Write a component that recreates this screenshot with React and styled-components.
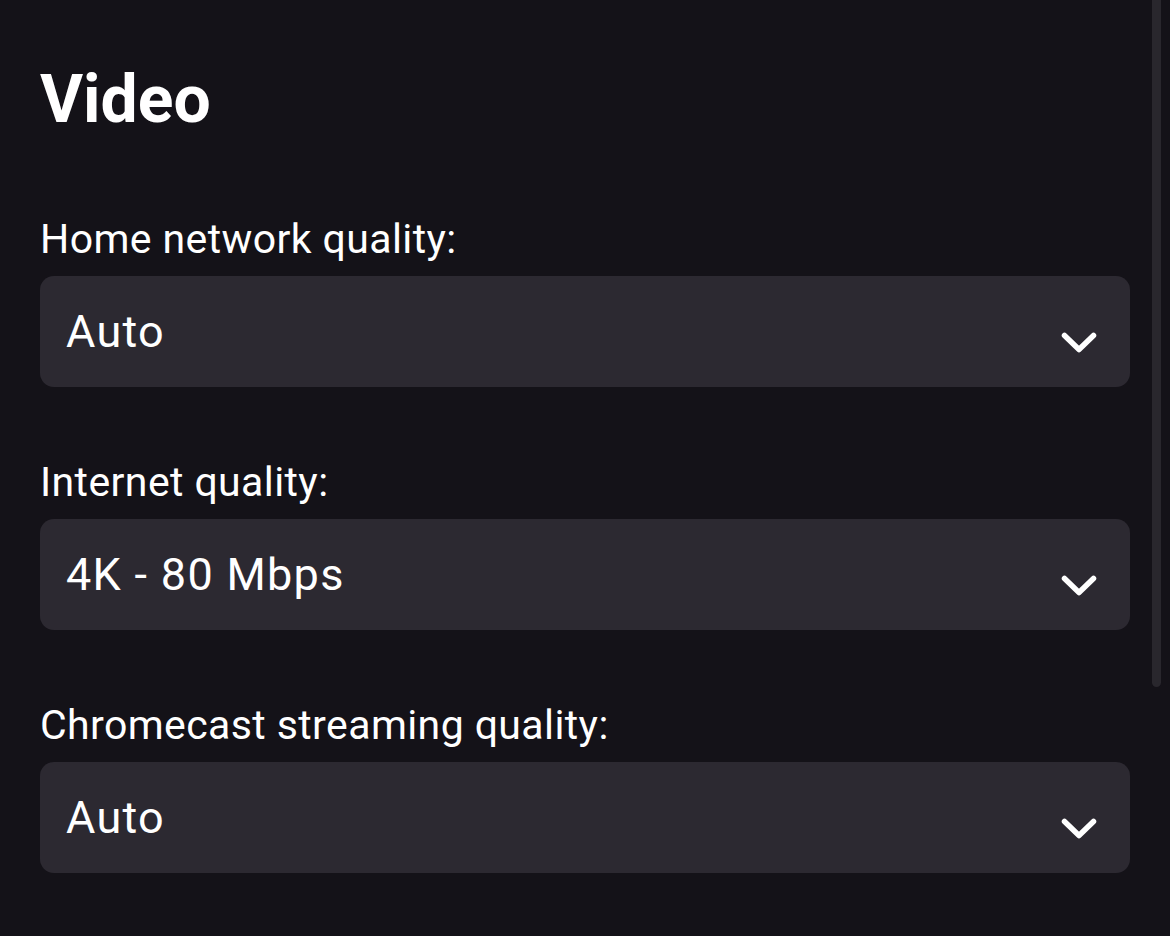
import styled, { createGlobalStyle } from "styled-components";

const GlobalStyle = createGlobalStyle`
  html, body {
    margin: 0;
    background: #141218;
  }
  body {
    font-family: Roboto, "Noto Sans", "Liberation Sans", sans-serif;
    color: #ffffff;
    overflow: hidden;
  }
`;

const fields = [
  { label: "Home network quality:", value: "Auto" },
  { label: "Internet quality:", value: "4K - 80 Mbps" },
  { label: "Chromecast streaming quality:", value: "Auto" },
];

const Chevron = () => (
  <ChevronIcon width="36" height="22" viewBox="0 0 36 22" aria-hidden="true">
    <polyline
      points="3.5,3.5 18,17.5 32.5,3.5"
      fill="none"
      stroke="#ffffff"
      strokeWidth="5.5"
      strokeLinecap="round"
      strokeLinejoin="round"
    />
  </ChevronIcon>
);

const App = () => {
  return (
    <>
      <GlobalStyle />
      <Page>
        <Title>Video</Title>
        {fields.map((field) => (
          <Field key={field.label}>
            <Label>{field.label}</Label>
            <SelectBox>
              <Value>{field.value}</Value>
              <Chevron />
            </SelectBox>
          </Field>
        ))}
      </Page>
      <ScrollThumb />
    </>
  );
};

const Page = styled.div`
  padding: 61px 40px 0 40px;
  min-height: 936px;
  box-sizing: border-box;
`;

const Title = styled.h1`
  margin: 0 0 76px;
  font-size: 66px;
  line-height: 78px;
  font-weight: 700;
`;

const Field = styled.div`
  display: flex;
  flex-direction: column;
  margin-bottom: 71px;
`;

const Label = styled.div`
  font-size: 41px;
  line-height: 48px;
  letter-spacing: 0.4px;
  margin-bottom: 13px;
`;

const SelectBox = styled.div`
  display: flex;
  align-items: center;
  justify-content: space-between;
  height: 111px;
  padding: 0 33px 0 26px;
  background: #2c2931;
  border-radius: 14px;
`;

const Value = styled.span`
  font-size: 45px;
  line-height: 53px;
  letter-spacing: 1.3px;
`;

const ChevronIcon = styled.svg`
  display: block;
  margin-top: 23px;
`;

const ScrollThumb = styled.div`
  position: fixed;
  top: 0;
  right: 9px;
  width: 9px;
  height: 687px;
  background: #29272d;
  border-radius: 0 0 5px 5px;
`;

export default App;
